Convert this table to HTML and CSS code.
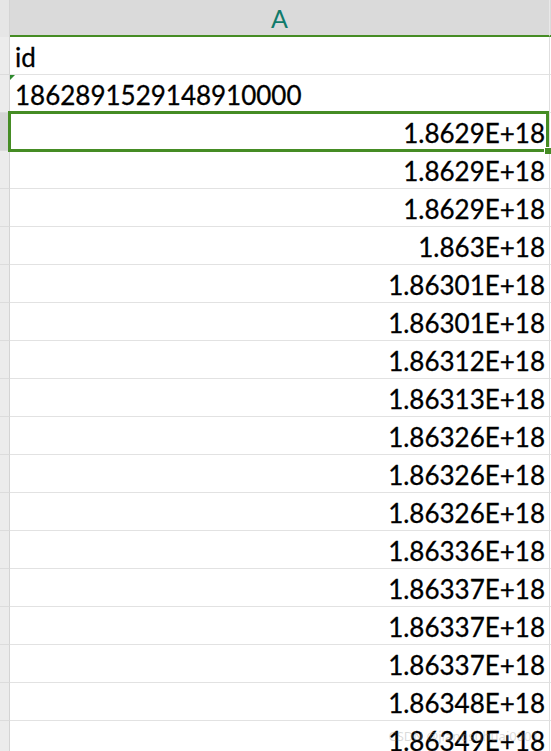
FILE: index.html
```html
<!DOCTYPE html>
<html>
<head>
<meta charset="utf-8">
<link rel="stylesheet" href="styles.css">
</head>
<body>
<div class="sheet">
  <div class="gutter head-gutter"></div>
  <div class="colhead">A</div>
  <div class="colend head-end"></div>

  <div class="gutter"></div>
  <div class="cell left">id</div>
  <div class="colend"></div>

  <div class="gutter"></div>
  <div class="cell left"><span class="tri"></span>1862891529148910000</div>
  <div class="colend"></div>

  <div class="gutter sel"></div>
  <div class="cell num active">1.8629E+18<span class="selbox"></span><span class="handle"></span></div>
  <div class="colend"></div>

  <div class="gutter"></div><div class="cell num">1.8629E+18</div><div class="colend"></div>
  <div class="gutter"></div><div class="cell num">1.8629E+18</div><div class="colend"></div>
  <div class="gutter"></div><div class="cell num">1.863E+18</div><div class="colend"></div>
  <div class="gutter"></div><div class="cell num">1.86301E+18</div><div class="colend"></div>
  <div class="gutter"></div><div class="cell num">1.86301E+18</div><div class="colend"></div>
  <div class="gutter"></div><div class="cell num">1.86312E+18</div><div class="colend"></div>
  <div class="gutter"></div><div class="cell num">1.86313E+18</div><div class="colend"></div>
  <div class="gutter"></div><div class="cell num">1.86326E+18</div><div class="colend"></div>
  <div class="gutter"></div><div class="cell num">1.86326E+18</div><div class="colend"></div>
  <div class="gutter"></div><div class="cell num">1.86326E+18</div><div class="colend"></div>
  <div class="gutter"></div><div class="cell num">1.86336E+18</div><div class="colend"></div>
  <div class="gutter"></div><div class="cell num">1.86337E+18</div><div class="colend"></div>
  <div class="gutter"></div><div class="cell num">1.86337E+18</div><div class="colend"></div>
  <div class="gutter"></div><div class="cell num">1.86337E+18</div><div class="colend"></div>
  <div class="gutter"></div><div class="cell num">1.86348E+18</div><div class="colend"></div>
  <div class="gutter"></div><div class="cell num">1.86349E+18</div><div class="colend"></div>
</div>
<div class="watermark">CSDN @jiangsuhuai0001</div>
</body>
</html>
```
FILE: styles.css
```css
html, body {
  margin: 0;
  padding: 0;
  background: #ffffff;
  overflow: hidden;
  width: 551px;
  height: 751px;
}
.sheet {
  display: grid;
  grid-template-columns: 10px 539px 2px;
  grid-auto-rows: 38px;
  grid-template-rows: 37px;
  font-family: Lato, "Open Sans", sans-serif;
  color: #000;
}
.gutter {
  background: #ececec;
  border-right: 1px solid #d4d4d4;
  border-bottom: 1px solid #dcdcdc;
  box-sizing: border-box;
}
.gutter.head-gutter {
  background: #e6e6e6;
  border-bottom: none;
}
.gutter.sel {
  background: #d6d6d6;
}
.colhead {
  background: #dadada;
  border-bottom: 2px solid #458c24;
  box-sizing: border-box;
  display: flex;
  align-items: center;
  justify-content: center;
  color: #107a6b;
  font-size: 25px;
  padding-top: 1px;
}
.colend {
  border-left: 1px solid #dedede;
  border-bottom: 1px solid #e2e2e2;
  box-sizing: border-box;
}
.colend.head-end {
  background: #dadada;
  border-bottom: 2px solid #458c24;
  border-left: 1px solid #e8e8e8;
}
.cell {
  position: relative;
  border-bottom: 1px solid #e2e2e2;
  box-sizing: border-box;
  font-size: 26px;
  line-height: 37px;
  white-space: nowrap;
  display: flex;
  align-items: center;
  padding-top: 3px;
  -webkit-text-stroke: 0.3px #000;
}
.cell.left {
  padding-left: 5px;
}
.cell.num {
  justify-content: flex-end;
  padding-right: 4px;
}
.tri {
  position: absolute;
  left: 0;
  top: 0;
  width: 0;
  height: 0;
  border-top: 5px solid #2f8a2f;
  border-right: 5px solid transparent;
}
.selbox {
  position: absolute;
  left: -2px;
  top: -2px;
  right: 0px;
  bottom: -2px;
  border: 3px solid #458c24;
  pointer-events: none;
}
.handle {
  position: absolute;
  right: -2px;
  bottom: -4px;
  width: 6px;
  height: 6px;
  background: #458c24;
  border-left: 1px solid #fff;
  border-top: 1px solid #fff;
}
.watermark {
  position: absolute;
  right: 12px;
  bottom: 6px;
  font-family: "Noto Sans", sans-serif;
  font-size: 13px;
  color: rgba(150, 150, 150, 0.35);
}
```
